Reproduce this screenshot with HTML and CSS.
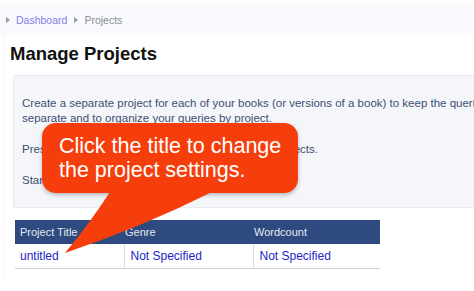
FILE: index.html
```html
<!DOCTYPE html>
<html lang="en">
  <head>
    <meta charset="UTF-8" />
    <meta name="viewport" content="width=device-width, initial-scale=1.0" />
    <title>Manage Projects</title>
    <link rel="stylesheet" href="styles.css">
  </head>
  <body>
    <div class="page">
      <div class="crumbs">
        <span class="arrow"></span>
        <a href="#" class="crumb-link">Dashboard</a>
        <span class="arrow"></span>
        <span class="crumb-current">Projects</span>
      </div>

      <div class="main">
        <h1>Manage Projects</h1>

        <div class="info">
          <p>Create a separate project for each of your books (or versions of a book) to keep the queries for each book<br />separate and to organize your queries by project.</p>
          <p>Press the New Project button to create additional projects.</p>
          <p>Start by editing the settings of your first project.</p>
        </div>

        <table class="projects">
          <thead>
            <tr>
              <th class="col-title">Project Title</th>
              <th class="col-genre">Genre</th>
              <th class="col-count">Wordcount</th>
            </tr>
          </thead>
          <tbody>
            <tr>
              <td><a href="#">untitled</a></td>
              <td><a href="#">Not Specified</a></td>
              <td><a href="#">Not Specified</a></td>
            </tr>
          </tbody>
        </table>
      </div>

      <!-- help bubble over the page -->
      <div class="callout">
        Click the title to change<br />
        the project settings.
      </div>
      <svg class="callout-tail" width="160" height="64" viewBox="0 0 160 64">
        <path d="M58 0 L160 0 Q90 35 13 61 Q35 35 58 0 Z" fill="#f53e0b" />
      </svg>
    </div>
  </body>
</html>
```

FILE: styles.css
```css
body {
  margin: 0;
  padding: 0;
  font-family: "Liberation Sans", Arial, sans-serif;
  background-color: #ffffff;
  color: #333;
}

.page {
  position: relative;
  width: 474px;
  height: 291px;
  overflow: hidden;
}

.crumbs {
  margin: 4px 2px 0 0;
  height: 31px;
  background-color: #f9fafd;
  display: flex;
  align-items: center;
  gap: 6px;
  padding-left: 6px;
  font-size: 10.5px;
}

.arrow {
  width: 0;
  height: 0;
  border-left: 4px solid #9a9ca4;
  border-top: 3px solid transparent;
  border-bottom: 3px solid transparent;
}

.crumb-link {
  color: #7f80e6;
  text-decoration: none;
  margin-right: 1px;
}

.crumb-current {
  color: #8a8d94;
}

.main {
  margin-left: 3px;
  padding: 0 0 11px 6px;
  border-left: 1px solid #f3f4f8;
}

h1 {
  margin: 0;
  padding-top: 8px;
  font-size: 18.5px;
  line-height: 21px;
  color: #111;
}

.info {
  margin: 11px -10px 0 3px;
  padding: 20px 8px 19px 8px;
  background-color: #f4f6fa;
  border: 1px solid #e7eaf0;
  border-right: none;
  border-radius: 3px 0 0 3px;
  font-size: 11.5px;
  line-height: 15px;
  color: #3d4f72;
  white-space: nowrap;
}

.info p {
  margin: 0;
}

.info p + p {
  margin-top: 16px;
}

.projects {
  margin: 12px 0 0 5px;
  border-collapse: collapse;
  width: 365px;
  font-size: 12px;
}

.projects th {
  background-color: #2e4a7f;
  color: #e3e8f2;
  font-weight: normal;
  font-size: 11px;
  text-align: left;
  height: 24px;
  padding: 0 1px;
}

.projects th.col-title {
  padding-left: 5px;
  width: 103px;
}

.projects th.col-genre {
  width: 127px;
}

.projects td {
  height: 24px;
  padding: 0 6px;
  border-bottom: 1px solid #cfd3dc;
  border-left: 1px solid #d8dce4;
}

.projects td:first-child {
  border-left: none;
  padding-left: 5px;
}

.projects a {
  color: #2224c8;
  text-decoration: none;
}

.callout {
  position: absolute;
  left: 42px;
  top: 123px;
  width: 256px;
  height: 70px;
  box-sizing: border-box;
  padding: 11px 0 0 17px;
  background-color: #f53e0b;
  border-radius: 14px;
  box-shadow: 0 2px 4px rgba(0, 0, 0, 0.25);
  color: #ffffff;
  font-size: 21.5px;
  line-height: 24px;
  white-space: nowrap;
}

.callout-tail {
  position: absolute;
  left: 52px;
  top: 192px;
}
```
